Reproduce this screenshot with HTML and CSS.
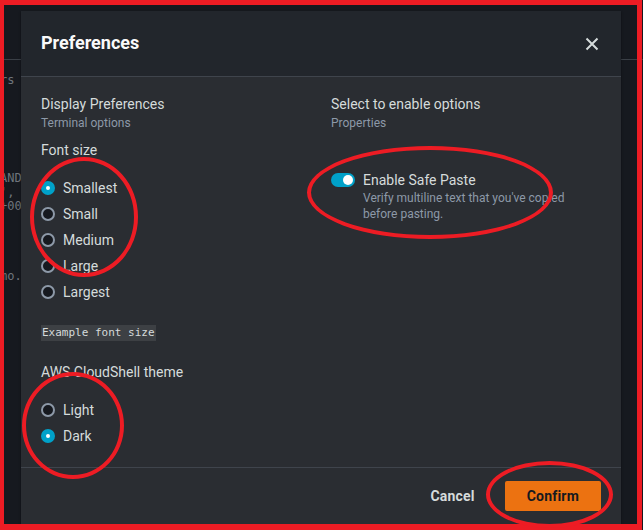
FILE: index.html
```html
<!DOCTYPE html>
<html lang="en">
<head>
  <meta charset="utf-8">
  <meta name="viewport" content="width=device-width,initial-scale=1">
  <title>AWS CloudShell - Preferences</title>
  <link rel="stylesheet" href="styles.css">
</head>
<body>
  <div class="terminal">
    <div class="terminal-bar"></div>
    <div class="terminal-lines">
      <div class="tline">rs </div>
      <div class="tline"></div>
      <div class="tline"></div>
      <div class="tline"></div>
      <div class="tline"></div>
      <div class="tline"></div>
      <div class="tline"></div>
      <div class="tline">AND</div>
      <div class="tline">',  </div>
      <div class="tline">+00</div>
      <div class="tline"></div>
      <div class="tline"></div>
      <div class="tline"></div>
      <div class="tline"></div>
      <div class="tline">mo.</div>
    </div>
  </div>

  <div class="modal">
    <header class="modal-header">
      <h2>Preferences</h2>
      <button class="close" aria-label="Close">
        <svg width="14" height="14" viewBox="0 0 14 14">
          <path d="M1.5 1.5l11 11M12.5 1.5l-11 11" stroke="#d5dbdb" stroke-width="2" fill="none"/>
        </svg>
      </button>
    </header>

    <div class="modal-body">
      <section class="col">
        <h3>Display Preferences</h3>
        <p class="sub">Terminal options</p>

        <h4 class="group-title">Font size</h4>
        <div class="radios">
          <label class="radio checked"><span class="dot"></span>Smallest</label>
          <label class="radio"><span class="dot"></span>Small</label>
          <label class="radio"><span class="dot"></span>Medium</label>
          <label class="radio"><span class="dot"></span>Large</label>
          <label class="radio"><span class="dot"></span>Largest</label>
        </div>

        <div class="example"><code>Example font size</code></div>

        <h4 class="group-title theme-title">AWS CloudShell theme</h4>
        <div class="radios">
          <label class="radio"><span class="dot"></span>Light</label>
          <label class="radio checked"><span class="dot"></span>Dark</label>
        </div>
      </section>

      <section class="col">
        <h3>Select to enable options</h3>
        <p class="sub">Properties</p>

        <div class="toggle-row">
          <span class="toggle"><span class="knob"></span></span>
          <div>
            <div class="toggle-label">Enable Safe Paste</div>
            <div class="toggle-desc">Verify multiline text that you've copied before pasting.</div>
          </div>
        </div>
      </section>
    </div>

    <footer class="modal-footer">
      <button class="btn-link">Cancel</button>
      <button class="btn-primary">Confirm</button>
    </footer>
  </div>

  <div class="mark frame"></div>
  <div class="mark ring ring-font"></div>
  <div class="mark ring ring-paste"></div>
  <div class="mark ring ring-theme"></div>
  <div class="mark ring ring-confirm"></div>
</body>
</html>
```

FILE: styles.css
```css
*, :after, :before {
  box-sizing: border-box;
}

html {
  height: 100%;
}

body {
  margin: 0;
  height: 100%;
  overflow: hidden;
  background-color: #16191f;
  font-family: Roboto, "Liberation Sans", sans-serif;
  color: #d5dbdb;
}

/* terminal behind the dialog */
.terminal {
  height: 100%;
}

.terminal-bar {
  height: 60px;
  border-bottom: 1px solid #3a3f46;
}

.terminal-lines {
  width: 21px;
  padding-top: 13px;
  font-family: "DejaVu Sans Mono", monospace;
  font-size: 12px;
  line-height: 14px;
  color: #6f757c;
}

.tline {
  height: 14px;
  text-align: right;
  white-space: pre;
}

/* dialog */
.modal {
  position: absolute;
  left: 21px;
  top: 11px;
  width: 600px;
  height: 513px;
  display: flex;
  flex-direction: column;
  background-color: #2a2d32;
  box-shadow: 0 1px 2px rgba(0, 0, 0, 0.5);
}

.modal-header {
  display: flex;
  align-items: center;
  justify-content: space-between;
  height: 66px;
  padding: 0 20px;
  background-color: #22262c;
  border-bottom: 1px solid #3f444c;
}

.modal-header h2 {
  margin: 0;
  font-size: 18px;
  font-weight: 700;
  color: #fafafa;
  padding-bottom: 2px;
}

.close {
  display: flex;
  padding: 0;
  margin-right: 2px;
  border: 0;
  background: none;
}

.modal-body {
  flex: 1;
  display: grid;
  grid-template-columns: 270px 270px;
  column-gap: 20px;
  padding: 17px 20px 0;
}

.col h3 {
  margin: 0;
  font-size: 14px;
  line-height: 20px;
  font-weight: 400;
  color: #d5dbdb;
}

.sub {
  margin: 1px 0 0;
  font-size: 12px;
  line-height: 16px;
  color: #8d99a8;
}

.group-title {
  margin: 9px 0 0;
  font-size: 14px;
  line-height: 20px;
  font-weight: 400;
  color: #d5dbdb;
}

.radios {
  margin-top: 15px;
}

.radio {
  display: flex;
  align-items: center;
  height: 26px;
  font-size: 14px;
  color: #d5dbdb;
}

.dot {
  width: 14px;
  height: 14px;
  margin-right: 8px;
  border: 2px solid #8d99a8;
  border-radius: 50%;
  background-color: #16191f;
}

.radio.checked .dot {
  border: 5px solid #00a1c9;
  background-color: #ffffff;
}

.example {
  margin-top: 16px;
}

.example code {
  display: inline-block;
  height: 16px;
  padding: 0 1px;
  font-family: "DejaVu Sans Mono", monospace;
  font-size: 11px;
  line-height: 16px;
  color: #d5dbdb;
  background-color: #3d4044;
}

.theme-title {
  margin-top: 21px;
}

.toggle-row {
  display: flex;
  align-items: flex-start;
  gap: 8px;
  margin-top: 39px;
}

.toggle {
  display: flex;
  align-items: center;
  justify-content: flex-end;
  flex: none;
  width: 24px;
  height: 14px;
  margin-top: 3px;
  padding: 0 2px;
  border-radius: 7px;
  background-color: #00a1c9;
}

.knob {
  width: 10px;
  height: 10px;
  border-radius: 50%;
  background-color: #ffffff;
}

.toggle-label {
  font-size: 14px;
  line-height: 20px;
  color: #d5dbdb;
}

.toggle-desc {
  width: 230px;
  font-size: 12px;
  line-height: 16px;
  color: #8d99a8;
}

.modal-footer {
  display: flex;
  align-items: center;
  justify-content: flex-end;
  gap: 10px;
  height: 57px;
  padding: 0 20px;
  border-top: 1px solid #3f444c;
}

.btn-link,
.btn-primary {
  height: 30px;
  padding: 0 20px;
  border: 0;
  border-radius: 2px;
  font-family: Roboto, "Liberation Sans", sans-serif;
  font-size: 14px;
  font-weight: 700;
  letter-spacing: 0.2px;
}

.btn-link {
  background: none;
  color: #d5dbdb;
}

.btn-primary {
  padding: 0 22px;
  background-color: #ec7211;
  color: #16191f;
}

/* red annotation marks drawn over the screenshot */
.mark {
  position: absolute;
  pointer-events: none;
}

.frame {
  left: 0;
  top: 0;
  width: 642px;
  height: 530px;
  border-style: solid;
  border-color: #ed1c24;
  border-width: 5px 5px 6px 4px;
}

.ring {
  border: 4px solid #ed1c24;
  border-radius: 50%;
}

.ring-font {
  left: 30px;
  top: 157px;
  width: 108px;
  height: 120px;
}

.ring-paste {
  left: 307px;
  top: 146px;
  width: 246px;
  height: 93px;
}

.ring-theme {
  left: 22px;
  top: 372px;
  width: 102px;
  height: 107px;
}

.ring-confirm {
  left: 486px;
  top: 461px;
  width: 127px;
  height: 67px;
}
```
